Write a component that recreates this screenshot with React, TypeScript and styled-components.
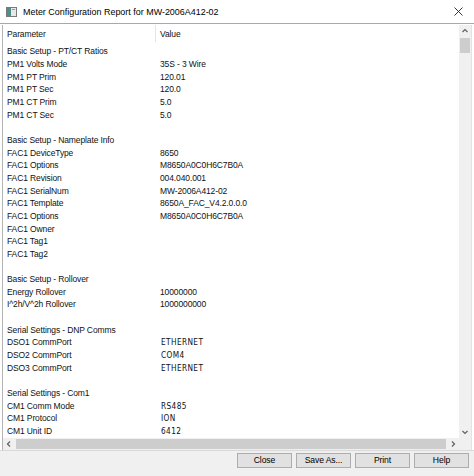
import React from 'react'
import styled, { createGlobalStyle } from 'styled-components'

const GlobalStyle = createGlobalStyle`
    html, body {
        margin: 0;
        padding: 0;
        background: #fff;
    }
    body {
        font-family: "Liberation Sans", Arial, sans-serif;
        color: #111;
    }
`

const ROW_H = 12.66

const Window = styled.div`
    width: 474px;
    height: 476px;
    display: flex;
    flex-direction: column;
    background: #fff;
    overflow: hidden;
`

const TitleBar = styled.div`
    height: 24px;
    display: flex;
    align-items: center;
    padding: 0 6px;
    border-bottom: 1px solid #a8a8a8;
    box-sizing: border-box;
    flex-shrink: 0;
`

const TitleText = styled.div`
    flex: 1;
    font-size: 8.95px;
    margin-left: 6px;
    color: #000;
`

const CloseX = styled.div`
    width: 12px;
    display: flex;
    justify-content: center;
    margin-right: 4px;
`

const ListFrame = styled.div`
    flex: 1;
    margin: 1px 2px 0 2px;
    border-left: 1px solid #b4b4b4;
    border-right: 1px solid #e3e3e3;
    display: grid;
    grid-template-columns: 1fr 12px;
    grid-template-rows: 1fr 12px;
    min-height: 0;
`

const ListBody = styled.div`
    display: flex;
    flex-direction: column;
    overflow: hidden;
`

const HeaderRow = styled.div`
    height: 20px;
    display: grid;
    grid-template-columns: 153px 1fr;
    flex-shrink: 0;
    font-size: 8.5px;
    letter-spacing: -0.12px;
`

const HeaderCell = styled.div<{ $divider?: boolean }>`
    height: 17px;
    display: flex;
    align-items: center;
    padding: 1px 0 0 4px;
    box-sizing: border-box;
    border-right: ${p => (p.$divider ? '1px solid #e5e5e5' : 'none')};
`

const Row = styled.div`
    height: ${ROW_H}px;
    display: grid;
    grid-template-columns: 153px 1fr;
    align-items: center;
    white-space: nowrap;
    flex-shrink: 0;
`

const Cell = styled.div<{ $alt?: boolean }>`
    padding-left: ${p => (p.$alt ? '5px' : '4px')};
    letter-spacing: ${p => (p.$alt ? '0.4px' : '-0.12px')};
    font-family: ${p => (p.$alt ? '"DejaVu Sans Condensed", "DejaVu Sans", sans-serif' : 'inherit')};
    font-size: ${p => (p.$alt ? '8.2px' : '8.5px')};
`

const VScroll = styled.div`
    background: #f0f0f0;
    display: flex;
    flex-direction: column;
    align-items: center;
`

const HScroll = styled.div`
    background: #f0f0f0;
    display: flex;
    align-items: center;
`

const Corner = styled.div`
    background: #f0f0f0;
`

const Arrow = styled.div`
    width: 12px;
    height: 12px;
    display: flex;
    align-items: center;
    justify-content: center;
    flex-shrink: 0;
`

const VThumb = styled.div`
    width: 10px;
    height: 15px;
    background: #cdcdcd;
    margin-top: 1px;
`

const VTrack = styled.div`
    flex: 1;
`

const HThumb = styled.div`
    flex: 1;
    height: 10px;
    background: #cdcdcd;
    margin: 0 1px;
`

const ButtonBar = styled.div`
    height: 26px;
    flex-shrink: 0;
    background: #f0f0f0;
    border-top: 1px solid #d9d9d9;
    box-sizing: border-box;
    display: flex;
    justify-content: flex-end;
    align-items: center;
    gap: 4px;
    padding: 0 5px 6px 0;
`

const DlgButton = styled.button`
    width: 55px;
    height: 15px;
    padding: 0;
    margin: 0;
    background: #e1e1e1;
    border: 1px solid #adadad;
    font-family: "Liberation Sans", Arial, sans-serif;
    font-size: 8.6px;
    letter-spacing: -0.1px;
    color: #000;
    line-height: 13px;
`

type Item = { p?: string; v?: string; alt?: boolean }

const rows: Item[] = [
    { p: 'Basic Setup - PT/CT Ratios' },
    { p: 'PM1 Volts Mode', v: '35S - 3 Wire' },
    { p: 'PM1 PT Prim', v: '120.01' },
    { p: 'PM1 PT Sec', v: '120.0' },
    { p: 'PM1 CT Prim', v: '5.0' },
    { p: 'PM1 CT Sec', v: '5.0' },
    {},
    { p: 'Basic Setup - Nameplate Info' },
    { p: 'FAC1 DeviceType', v: '8650' },
    { p: 'FAC1 Options', v: 'M8650A0C0H6C7B0A' },
    { p: 'FAC1 Revision', v: '004.040.001' },
    { p: 'FAC1 SerialNum', v: 'MW-2006A412-02' },
    { p: 'FAC1 Template', v: '8650A_FAC_V4.2.0.0.0' },
    { p: 'FAC1 Options', v: 'M8650A0C0H6C7B0A' },
    { p: 'FAC1 Owner' },
    { p: 'FAC1 Tag1' },
    { p: 'FAC1 Tag2' },
    {},
    { p: 'Basic Setup - Rollover' },
    { p: 'Energy Rollover', v: '10000000' },
    { p: 'I^2h/V^2h Rollover', v: '1000000000' },
    {},
    { p: 'Serial Settings - DNP Comms' },
    { p: 'DSO1 CommPort', v: 'ETHERNET', alt: true },
    { p: 'DSO2 CommPort', v: 'COM4', alt: true },
    { p: 'DSO3 CommPort', v: 'ETHERNET', alt: true },
    {},
    { p: 'Serial Settings - Com1' },
    { p: 'CM1 Comm Mode', v: 'RS485', alt: true },
    { p: 'CM1 Protocol', v: 'ION', alt: true },
    { p: 'CM1 Unit ID', v: '6412', alt: true },
]

const Chevron = ({ dir }: { dir: 'up' | 'down' | 'left' | 'right' }) => {
    const d = {
        up: 'M1.5 5 L4 2.5 L6.5 5',
        down: 'M1.5 3 L4 5.5 L6.5 3',
        left: 'M5 1.5 L2.5 4 L5 6.5',
        right: 'M3 1.5 L5.5 4 L3 6.5',
    }[dir]
    return (
        <svg width="8" height="8" viewBox="0 0 8 8">
            <path d={d} fill="none" stroke="#606060" strokeWidth="1.2" />
        </svg>
    )
}

export default function App() {
    return (
        <Window>
            <GlobalStyle />
            <TitleBar>
                <svg width="11" height="10" viewBox="0 0 11 10">
                    <rect x="0.5" y="0.5" width="10" height="9" fill="#e8e8e8" stroke="#7a7a7a" />
                    <rect x="1" y="1" width="4" height="8" fill="#4f8f8a" />
                    <rect x="6" y="2" width="3" height="1" fill="#9a9a9a" />
                </svg>
                <TitleText>Meter Configuration Report for MW-2006A412-02</TitleText>
                <CloseX>
                    <svg width="9" height="9" viewBox="0 0 9 9">
                        <path d="M0.5 0.5 L8.5 8.5 M8.5 0.5 L0.5 8.5" stroke="#222" strokeWidth="0.9" />
                    </svg>
                </CloseX>
            </TitleBar>
            <ListFrame>
                <ListBody>
                    <HeaderRow>
                        <HeaderCell $divider>Parameter</HeaderCell>
                        <HeaderCell>Value</HeaderCell>
                    </HeaderRow>
                    {rows.map((r, i) => (
                        <Row key={i}>
                            <Cell>{r.p ?? ''}</Cell>
                            <Cell $alt={r.alt}>{r.v ?? ''}</Cell>
                        </Row>
                    ))}
                </ListBody>
                <VScroll>
                    <Arrow><Chevron dir="up" /></Arrow>
                    <VThumb />
                    <VTrack />
                    <Arrow><Chevron dir="down" /></Arrow>
                </VScroll>
                <HScroll>
                    <Arrow><Chevron dir="left" /></Arrow>
                    <HThumb />
                    <Arrow><Chevron dir="right" /></Arrow>
                </HScroll>
                <Corner />
            </ListFrame>
            <ButtonBar>
                <DlgButton>Close</DlgButton>
                <DlgButton>Save As...</DlgButton>
                <DlgButton>Print</DlgButton>
                <DlgButton>Help</DlgButton>
            </ButtonBar>
        </Window>
    )
}
